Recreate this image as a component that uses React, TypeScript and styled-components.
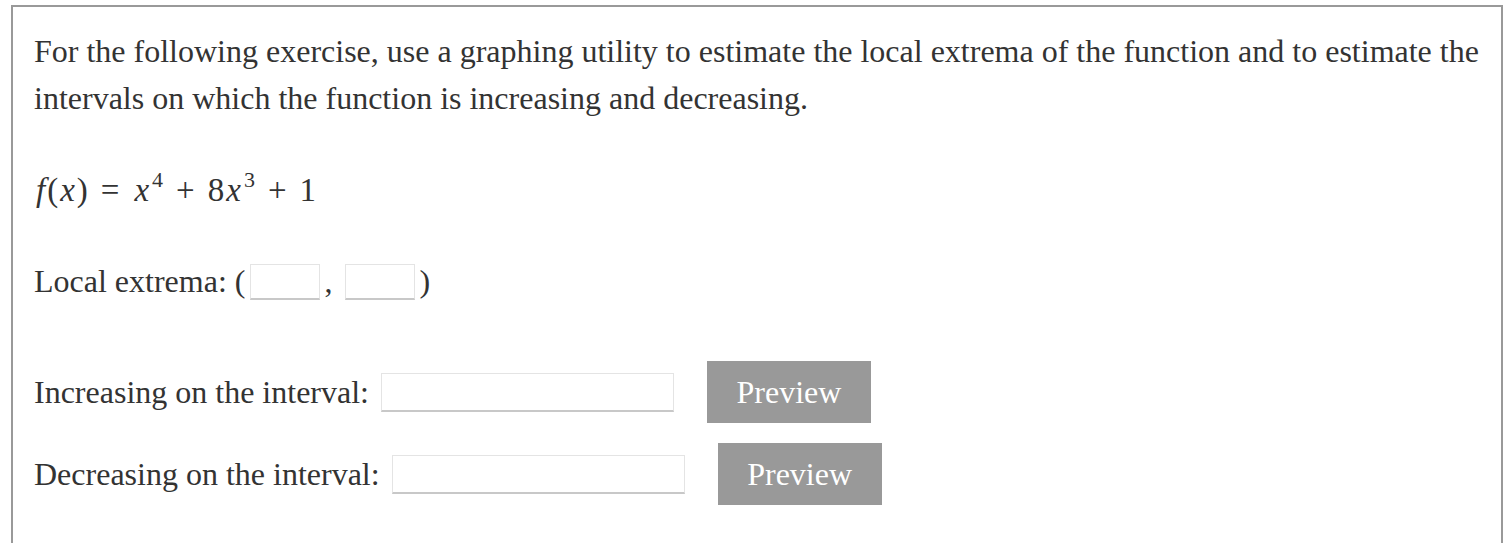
import styled, { createGlobalStyle } from "styled-components";

const GlobalStyle = createGlobalStyle`
  body {
    margin: 0;
    background: #ffffff;
    font-family: "Liberation Serif", "Times New Roman", serif;
    color: #333333;
  }
`;

const Card = styled.div`
  margin: 5px 1px 0 11px;
  border: 2px solid #999999;
  border-bottom: none;
  padding: 21px 10px 40px 21px;
  min-height: 520px;
  box-sizing: border-box;
  font-size: 32px;
  line-height: 47px;
`;

const Prompt = styled.p`
  margin: 0;
`;

const MathLine = styled.p`
  margin: 45px 0 0 0;
  font-size: 33px;
  font-family: "Liberation Serif", serif;
`;

const Var = styled.i`
  font-style: italic;
  padding: 0 2px;
`;

const Op = styled.span`
  margin: 0 13px;
`;

const Sup = styled.sup`
  font-size: 22px;
  line-height: 0;
  vertical-align: 14px;
  margin-left: 1px;
`;

const Extrema = styled.div`
  margin-top: 44px;
  display: flex;
  align-items: center;
  height: 47px;
`;

const SmallInput = styled.input<{ $left: number; $right: number }>`
  width: 70px;
  height: 36px;
  box-sizing: border-box;
  border: 1px solid #e4e4e4;
  border-bottom: 2px solid #c8c8c8;
  margin: 0 ${(p) => p.$right}px 0 ${(p) => p.$left}px;
  padding: 0;
`;

const Row = styled.div<{ $top: number }>`
  margin-top: ${(p) => p.$top}px;
  display: flex;
  align-items: center;
  height: 62px;
`;

const Label = styled.span`
  white-space: nowrap;
`;

const WideInput = styled.input`
  width: 293px;
  height: 39px;
  box-sizing: border-box;
  margin-left: 12px;
  border: 1px solid #e4e4e4;
  border-bottom: 2px solid #c8c8c8;
  padding: 0;
`;

const PreviewButton = styled.button`
  margin-left: 33px;
  width: 164px;
  height: 62px;
  border: none;
  background: #999999;
  color: #ffffff;
  font-family: "Liberation Serif", "Times New Roman", serif;
  font-size: 32px;
  padding: 0;
`;

export default function App() {
  return (
    <>
      <GlobalStyle />
      <Card>
        <Prompt>
          For the following exercise, use a graphing utility to estimate the local extrema of the
          function and to estimate the intervals on which the function is increasing and decreasing.
        </Prompt>
        <MathLine>
          <Var>f</Var>(<Var>x</Var>)<Op>=</Op>
          <Var>x</Var>
          <Sup>4</Sup>
          <Op>+</Op>8<Var>x</Var>
          <Sup>3</Sup>
          <Op>+</Op>1
        </MathLine>
        <Extrema>
          <Label>Local extrema: (</Label>
          <SmallInput $left={5} $right={4} />
          <Label>,</Label>
          <SmallInput $left={13} $right={4} />
          <Label>)</Label>
        </Extrema>
        <Row $top={56}>
          <Label>Increasing on the interval:</Label>
          <WideInput />
          <PreviewButton>Preview</PreviewButton>
        </Row>
        <Row $top={20}>
          <Label>Decreasing on the interval:</Label>
          <WideInput />
          <PreviewButton>Preview</PreviewButton>
        </Row>
      </Card>
    </>
  );
}
